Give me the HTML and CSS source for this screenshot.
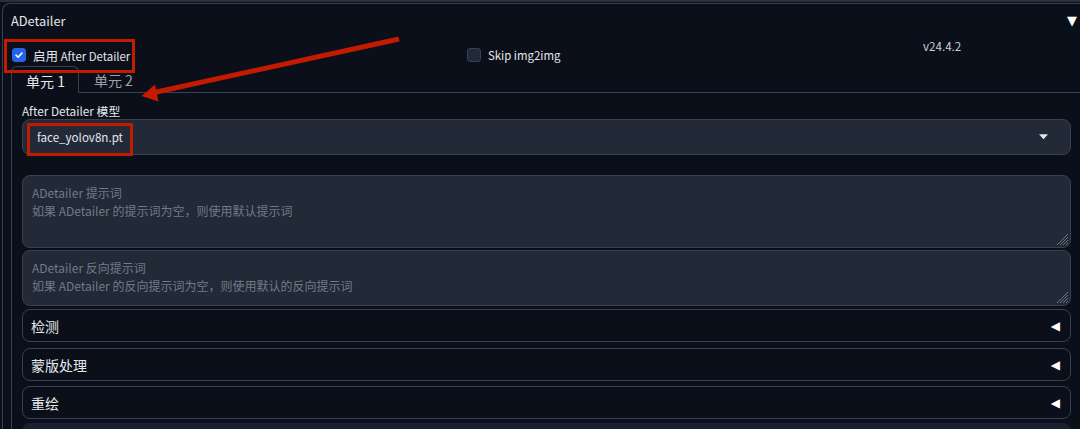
FILE: index.html
```html
<!DOCTYPE html>
<html lang="zh">
<head>
<meta charset="utf-8">
<link rel="stylesheet" href="styles.css">
</head>
<body>
<div class="topstrip"></div>
<div class="panel">
  <div class="title-row">
    <span class="title">ADetailer</span>
    <span class="caret-down">▼</span>
  </div>
  <div class="opt-row">
    <label class="check"><span class="box on"><svg viewBox="0 0 12 12" width="12" height="12"><path d="M3 6.2 L5.1 8.2 L9 4" fill="none" stroke="#fff" stroke-width="1.6" stroke-linecap="round" stroke-linejoin="round"/></svg></span><span class="lbl">启用 <span class="lat">After Detailer</span></span></label>
    <label class="check"><span class="box"></span><span class="lbl lat">Skip img2img</span></label>
    <div class="version">v24.4.2</div>
  </div>
  <div class="tabs">
    <div class="tab active">单元 1</div>
    <div class="tab">单元 2</div>
    <div class="tab-line"></div>
  </div>
  <div class="tabpanel">
    <div class="field-label">After Detailer 模型</div>
    <div class="dropdown">
      <span class="dd-text">face_yolov8n.pt</span>
      <svg class="dd-caret" viewBox="0 0 10 6" width="9" height="6"><path d="M0 0 H10 L5 5.5 Z" fill="#e5e7eb"/></svg>
    </div>
    <div class="textareas">
      <div class="textarea tall">
        <div>ADetailer 提示词</div>
        <div>如果 ADetailer 的提示词为空，则使用默认提示词</div>
        <svg class="grip" viewBox="0 0 12 12" width="12" height="12"><path d="M11 3 L3 11 M11 6 L6 11 M11 9 L9 11 M11 0 L0 11" stroke="#6b7280" stroke-width="1"/></svg>
      </div>
      <div class="textarea">
        <div>ADetailer 反向提示词</div>
        <div>如果 ADetailer 的反向提示词为空，则使用默认的反向提示词</div>
        <svg class="grip" viewBox="0 0 12 12" width="12" height="12"><path d="M11 3 L3 11 M11 6 L6 11 M11 9 L9 11 M11 0 L0 11" stroke="#6b7280" stroke-width="1"/></svg>
      </div>
    </div>
    <div class="accordion acc1"><span>检测</span><span class="caret-left">◀</span></div>
    <div class="accordion acc2"><span>蒙版处理</span><span class="caret-left">◀</span></div>
    <div class="accordion acc3"><span>重绘</span><span class="caret-left">◀</span></div>
    <div class="more"></div>
  </div>
</div>
<div class="mark mark-check"></div>
<div class="mark mark-model"></div>
<svg class="arrow" width="1080" height="429" viewBox="0 0 1080 429">
  <line x1="399" y1="39" x2="152" y2="93" stroke="#c41a00" stroke-width="5"/>
  <path d="M141.5 96 L155 84.5 L158.5 101.5 Z" fill="#c41a00"/>
</svg>
</body>
</html>
```

FILE: styles.css
```css
html, body {
  margin: 0;
  padding: 0;
  background: #0b0f19;
  overflow: hidden;
  width: 1080px;
  height: 429px;
}
body {
  font-family: "Noto Sans CJK SC", "Noto Sans", sans-serif;
  color: #e5e7eb;
  position: relative;
}
.topstrip {
  height: 2px;
  background: #2a2f3a;
}
.panel {
  margin-top: 1px;
  margin-left: 2px;
  border: 1px solid #374151;
  border-right: none;
  border-bottom: none;
  border-top-left-radius: 8px;
  padding-left: 8px;
  height: 440px;
}
.title-row {
  display: flex;
  justify-content: space-between;
  align-items: center;
  height: 32px;
  padding-right: 3px;
}
.title {
  font-size: 12.8px;
  margin-top: 1px;
}
.caret-down {
  font-family: "DejaVu Sans", sans-serif;
  font-size: 13px;
  color: #fff;
}
.opt-row {
  display: grid;
  grid-template-columns: 455px 456px 1fr;
  height: 31px;
  padding-left: 1px;
}
.check {
  display: flex;
  align-items: center;
  gap: 7px;
  font-size: 12.5px;
  margin-top: 7px;
  align-self: start;
  height: 24px;
}
.lat {
  font-size: 11.4px;
}
.box {
  width: 12px;
  height: 12px;
  border-radius: 3px;
  border: 1px solid #374151;
  background: #1f2937;
  display: flex;
  align-items: center;
  justify-content: center;
}
.box.on {
  background: #2563eb;
  border-color: #2563eb;
}
.lbl {
  color: #e5e7eb;
}
.version {
  font-size: 11.6px;
  color: #c9ced6;
  padding-top: 2px;
}
.tabs {
  display: flex;
  align-items: stretch;
  height: 27px;
  margin-top: -1px;
}
.tab {
  font-size: 14px;
  padding: 1px 14px 0 15px;
  display: flex;
  align-items: center;
  color: #9ca3af;
  border-bottom: 1px solid #374151;
}
.tab.active {
  color: #e5e7eb;
  border: 1px solid #374151;
  border-bottom: none;
  border-radius: 6px 6px 0 0;
  padding-left: 14px;
  padding-right: 13px;
}
.tab-line {
  flex: 1;
  border-bottom: 1px solid #374151;
}
.tabpanel {
  border-left: 1px solid #374151;
  padding: 10px 9px 0 10px;
}
.field-label {
  font-size: 11.8px;
  line-height: 16px;
  color: #e5e7eb;
}
.dropdown {
  height: 34px;
  background: #222937;
  border: 1px solid #374151;
  border-radius: 8px;
  display: flex;
  align-items: center;
  justify-content: space-between;
  padding: 0 22px 0 14px;
}
.dd-text {
  font-size: 11.6px;
  color: #e5e7eb;
}
.textareas {
  margin-top: 20px;
  display: flex;
  flex-direction: column;
  gap: 2px;
}
.textarea {
  position: relative;
  background: #222937;
  border: 1px solid #374151;
  border-radius: 8px;
  padding: 8px 9px 0 9px;
  height: 46px;
  font-size: 12px;
  line-height: 18px;
  color: #737a88;
}
.textarea.tall {
  height: 63px;
}
.grip {
  position: absolute;
  right: 1px;
  bottom: 1px;
}
.accordion {
  height: 31px;
  border: 1px solid #374151;
  border-radius: 8px;
  display: flex;
  align-items: center;
  justify-content: space-between;
  padding: 0 10px 0 8px;
  font-size: 14px;
  color: #e5e7eb;
}
.acc1 { margin-top: 3px; }
.acc2 { margin-top: 6px; }
.acc3 { margin-top: 5px; }
.caret-left {
  font-family: "DejaVu Sans", sans-serif;
  font-size: 12px;
  color: #fff;
}
.more {
  margin-top: 4px;
  height: 20px;
  background: #1a2030;
  border-radius: 8px 8px 0 0;
}
.mark {
  position: absolute;
  border: 3px solid #c41a00;
  box-sizing: border-box;
}
.mark-check {
  left: 4px;
  top: 39px;
  width: 131px;
  height: 34px;
}
.mark-model {
  left: 27px;
  top: 123px;
  width: 106px;
  height: 33px;
}
.arrow {
  position: absolute;
  left: 0;
  top: 0;
  pointer-events: none;
}
```
